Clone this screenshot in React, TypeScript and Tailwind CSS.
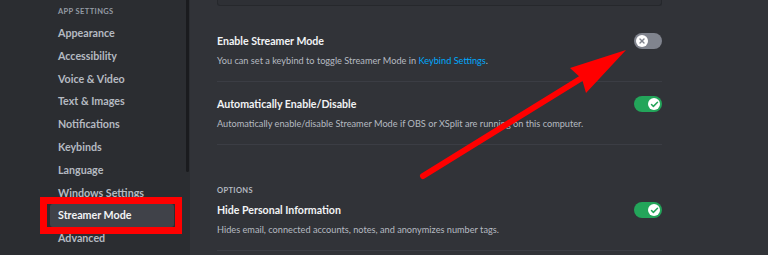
import { Check, X } from 'lucide-react';

const items = [
  'Appearance',
  'Accessibility',
  'Voice & Video',
  'Text & Images',
  'Notifications',
  'Keybinds',
  'Language',
  'Windows Settings',
  'Streamer Mode',
  'Advanced',
];

function Toggle({ on }: { on: boolean }) {
  return (
    <div
      className={`w-[28px] h-[16px] rounded-full flex items-center px-[2px] ${
        on ? 'bg-[#23a55a] justify-end' : 'bg-[#80848e] justify-start'
      }`}
    >
      <div className="w-[12px] h-[12px] rounded-full bg-white flex items-center justify-center">
        {on ? (
          <Check className="w-[9px] h-[9px] text-[#23a55a]" strokeWidth={4} />
        ) : (
          <X className="w-[8px] h-[8px] text-[#80848e]" strokeWidth={4} />
        )}
      </div>
    </div>
  );
}

function Setting({
  title,
  on,
  children,
}: {
  title: string;
  on: boolean;
  children: React.ReactNode;
}) {
  return (
    <div>
      <div className="flex items-center justify-between h-[16px]">
        <span className="text-[10.6px] leading-[16px] font-bold text-[#f2f3f5]">{title}</span>
        <Toggle on={on} />
      </div>
      <p className="mt-[6px] text-[9.2px] leading-[12px] text-[#b5bac1]">{children}</p>
      <div className="mt-[14px] h-px bg-[#3b3d44]" />
    </div>
  );
}

export default function App() {
  return (
    <div
      className="relative w-[768px] h-[255px] overflow-hidden flex bg-[#313338]"
      style={{ fontFamily: 'Lato, "Noto Sans", sans-serif' }}
    >
      {/* sidebar */}
      <div className="relative w-[190px] flex bg-[#2b2d31] shrink-0">
        <div className="w-[186px] pt-[6px] pl-[50px] pr-[12px]">
          <div className="pl-[8px] text-[7.5px] leading-[12px] font-bold tracking-[0.05em] text-[#949ba4] mb-[3.6px]">
            APP SETTINGS
          </div>
          {items.map((item) => (
            <div
              key={item}
              className={`h-[22.8px] pl-[8px] flex items-center rounded-[3px] text-[10.7px] font-bold ${
                item === 'Streamer Mode' ? 'bg-[#404249] text-[#f2f3f5]' : 'text-[#b5bac1]'
              }`}
            >
              {item}
            </div>
          ))}
        </div>
        <div className="w-[4px] bg-[#2b2d31]">
          <div className="w-[3px] h-[172px] rounded-b-full bg-[#1a1b1e]" />
        </div>
        {/* annotation box */}
        <div className="absolute left-[40px] top-[197px] w-[142px] h-[37px] border-[7px] border-[#ff0000]" />
      </div>

      {/* main */}
      <div className="flex-1 pl-[27px]">
        <div className="w-[445px] h-[6px] border border-t-0 border-[#26282c] bg-[#2e3035] rounded-b-[3px]" />
        <div className="w-[445px] mt-[27px] flex flex-col">
          <Setting title="Enable Streamer Mode" on={false}>
            You can set a keybind to toggle Streamer Mode in{' '}
            <span className="text-[#00a8fc]">Keybind Settings</span>.
          </Setting>
          <div className="mt-[14px]">
            <Setting title="Automatically Enable/Disable" on>
              Automatically enable/disable Streamer Mode if OBS or XSplit are running on this computer.
            </Setting>
          </div>
          <div className="mt-[40px] text-[7.5px] leading-[12px] font-bold tracking-[0.05em] text-[#b5bac1]">
            OPTIONS
          </div>
          <div className="mt-[5px]">
            <Setting title="Hide Personal Information" on>
              Hides email, connected accounts, notes, and anonymizes number tags.
            </Setting>
          </div>
        </div>
      </div>

      {/* annotation arrow */}
      <svg className="absolute inset-0 pointer-events-none" width="768" height="255" viewBox="0 0 768 255">
        <line x1="423" y1="176" x2="585" y2="76" stroke="#ff0000" strokeWidth="6" strokeLinecap="round" />
        <polygon points="626,50 570,68 582,79 586,93" fill="#ff0000" />
      </svg>
    </div>
  );
}
